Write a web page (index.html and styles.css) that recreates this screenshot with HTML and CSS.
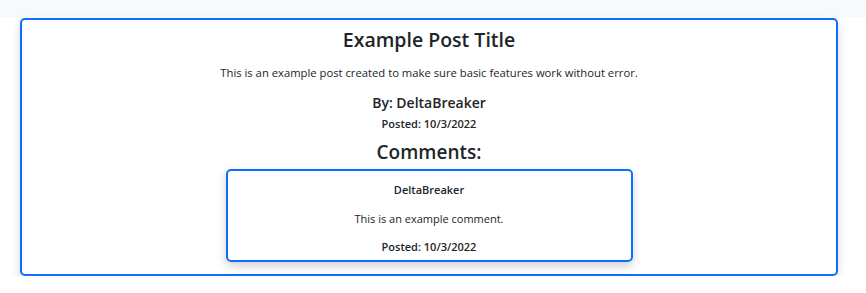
FILE: index.html
```html
<!DOCTYPE html>
<html lang="en">
<head>
  <meta charset="UTF-8">
  <title>Example Post Title</title>
  <link rel="stylesheet" href="styles.css">
</head>
<body>

<nav class="topbar"></nav>

<!-- Post -->
<div class="post">
  <h2 class="post-title">Example Post Title</h2>
  <p class="post-body">This is an example post created to make sure basic features work without error.</p>
  <h4 class="post-author">By: DeltaBreaker</h4>
  <p class="post-date">Posted: 10/3/2022</p>

  <h3 class="comments-title">Comments:</h3>
  <div class="comment">
    <p class="comment-author">DeltaBreaker</p>
    <p class="comment-body">This is an example comment.</p>
    <p class="comment-date">Posted: 10/3/2022</p>
  </div>
</div>

</body>
</html>
```

FILE: styles.css
```css
body {
  font-family: "Open Sans", "Noto Sans", sans-serif;
  color: #212529;
  background: #fff;
  margin: 0;
}
p, h2, h3, h4 {
  margin: 0;
}
.topbar {
  background: #f8f9fa;
  height: 17px;
}
.post {
  margin: 1px 0 0 20px;
  width: 814px;
  border: 2px solid #0d6efd;
  border-radius: 5px;
  box-shadow: 0 4px 10px rgba(0, 0, 0, 0.15);
  text-align: center;
  padding: 0 0 12px;
}
.post-title {
  font-size: 19.5px;
  font-weight: 600;
  line-height: 28px;
  margin-top: 6px;
}
.post-body {
  font-size: 11.25px;
  line-height: 18px;
  margin-top: 10px;
}
.post-author {
  font-size: 14px;
  font-weight: 600;
  line-height: 20px;
  margin-top: 11px;
}
.post-date {
  font-size: 11px;
  font-weight: 600;
  line-height: 16px;
  margin-top: 3px;
}
.comments-title {
  font-size: 19px;
  font-weight: 600;
  line-height: 26px;
  margin-top: 7px;
}
.comment {
  width: 403px;
  margin: 4px auto 0;
  border: 2px solid #0d6efd;
  border-radius: 5px;
  box-shadow: 0 4px 10px rgba(0, 0, 0, 0.18);
  padding: 11px 0 5px;
}
.comment p {
  font-size: 11px;
  line-height: 16px;
}
.comment-author, .comment-date {
  font-weight: 600;
}
.comment-body {
  margin-top: 13px;
}
.comment-date {
  margin-top: 12px;
}
```
